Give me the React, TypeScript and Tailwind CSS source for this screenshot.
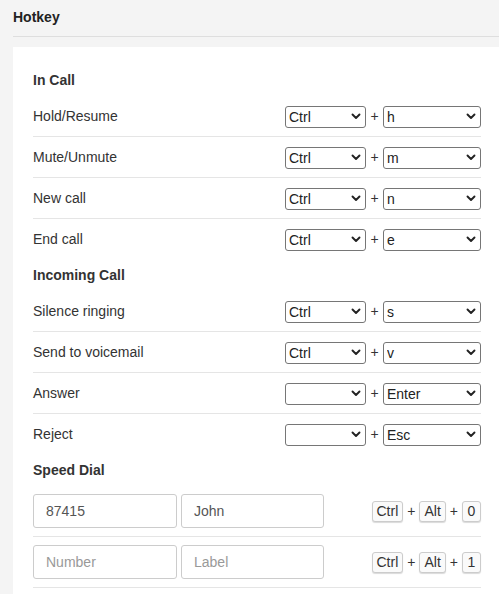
import React from "react";

type Hotkey = { label: string; mod: string; key: string };

const IN_CALL: Hotkey[] = [
  { label: "Hold/Resume", mod: "Ctrl", key: "h" },
  { label: "Mute/Unmute", mod: "Ctrl", key: "m" },
  { label: "New call", mod: "Ctrl", key: "n" },
  { label: "End call", mod: "Ctrl", key: "e" },
];

const INCOMING: Hotkey[] = [
  { label: "Silence ringing", mod: "Ctrl", key: "s" },
  { label: "Send to voicemail", mod: "Ctrl", key: "v" },
  { label: "Answer", mod: "", key: "Enter" },
  { label: "Reject", mod: "", key: "Esc" },
];

const SPEED_DIAL = [
  { number: "87415", label: "John", digit: "0" },
  { number: "", label: "", digit: "1" },
];

const Chevron = () => (
  <svg width="10" height="7" viewBox="0 0 10 7" className="absolute right-[5px] top-[8px] pointer-events-none">
    <path d="M1.5 1.5 L5 5 L8.5 1.5" fill="none" stroke="#222" strokeWidth="1.9" strokeLinecap="round" strokeLinejoin="round" />
  </svg>
);

const Select = ({ value, width }: { value: string; width: string }) => (
  <div className={`relative h-[22px] ${width}`}>
    <select
      defaultValue={value}
      className="appearance-none w-full h-full border border-[#767676] rounded-[3px] bg-white pl-[3px] text-[14px] text-[#222] leading-[20px]"
    >
      <option value={value}>{value}</option>
    </select>
    <Chevron />
  </div>
);

const Section = ({ title, rows }: { title: string; rows: Hotkey[] }) => (
  <div>
    <h3 className="py-2 text-[14px] leading-4 font-bold text-[#333]">{title}</h3>
    {rows.map((r, i) => (
      <div
        key={r.label}
        className={`flex items-center justify-between ${i < rows.length - 1 ? "h-[41px] border-b border-[#e5e5e5]" : "h-[40px]"}`}
      >
        <span className="text-[14px] text-[#333]">{r.label}</span>
        <div className="flex items-center">
          <Select value={r.mod} width="w-[81px]" />
          <span className="w-[17px] text-center text-[14px] text-[#333]">+</span>
          <Select value={r.key} width="w-[98px]" />
        </div>
      </div>
    ))}
  </div>
);

const Kbd = ({ children }: { children: React.ReactNode }) => (
  <span className="inline-flex items-center justify-center min-w-[19px] h-[21px] px-[4px] border border-[#ccc] rounded-[3px] bg-[#fafafa] shadow-[0_1px_1px_rgba(0,0,0,0.15)] text-[14px] text-[#333]">
    {children}
  </span>
);

export default function App() {
  return (
    <div className="min-h-screen bg-[#f4f4f4] pl-[13px] font-['Liberation_Sans',Arial,sans-serif] overflow-hidden">
      <div className="h-[37px] flex items-center border-b border-[#dedede]">
        <h2 className="text-[14px] font-bold text-[#222] -mt-[2px]">Hotkey</h2>
      </div>
      <div className="mt-[10px] bg-white pl-5 pt-[17px] pb-6 min-h-[560px]">
        <div className="w-[448px]">
          <Section title="In Call" rows={IN_CALL} />
          <Section title="Incoming Call" rows={INCOMING} />
          <div>
            <h3 className="py-2 text-[14px] leading-4 font-bold text-[#333]">Speed Dial</h3>
            {SPEED_DIAL.map((s) => (
              <div key={s.digit} className="flex items-center justify-between h-[51px] border-b border-[#e5e5e5]">
                <div className="flex gap-[4px]">
                  <input
                    defaultValue={s.number}
                    placeholder="Number"
                    className="w-[144px] h-[34px] border border-[#ccc] rounded-[3px] px-[12px] text-[14px] text-[#555] placeholder:text-[#999]"
                  />
                  <input
                    defaultValue={s.label}
                    placeholder="Label"
                    className="w-[143px] h-[34px] border border-[#ccc] rounded-[3px] px-[12px] text-[14px] text-[#555] placeholder:text-[#999]"
                  />
                </div>
                <div className="flex items-center gap-[4px] text-[14px] text-[#333]">
                  <Kbd>Ctrl</Kbd>
                  <span>+</span>
                  <Kbd>Alt</Kbd>
                  <span>+</span>
                  <Kbd>{s.digit}</Kbd>
                </div>
              </div>
            ))}
          </div>
        </div>
      </div>
    </div>
  );
}
